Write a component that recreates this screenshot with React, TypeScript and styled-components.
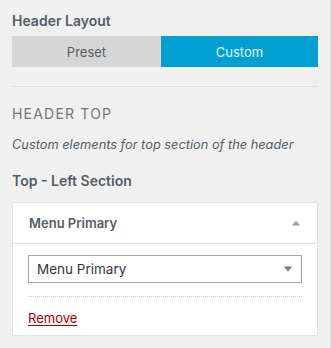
import { FC } from "react";
import styled, { createGlobalStyle } from "styled-components";

const GlobalStyle = createGlobalStyle`
  html, body {
    margin: 0;
    padding: 0;
    background: #f0f0f0;
  }
  body {
    font-family: Inter, "Noto Sans", "Liberation Sans", sans-serif;
    -webkit-font-smoothing: antialiased;
  }
`;

const Panel = styled.div`
  box-sizing: border-box;
  width: 331px;
  height: 348px;
  padding: 13px 12px 0 12px;
  background: #f0f0f0;
  border-right: 1px solid #dcdcdc;
  color: #555d66;
`;

const Title = styled.h3`
  margin: 0;
  font-size: 14px;
  font-weight: 600;
  line-height: 16px;
  color: #555d66;
`;

const Switcher = styled.div`
  display: flex;
  margin-top: 7px;
  height: 31px;
`;

const SwitchButton = styled.button<{ $active?: boolean }>`
  flex: ${(p) => (p.$active ? "0 0 157px" : "1")};
  border: 0;
  margin: 0;
  padding: 0;
  font-family: inherit;
  font-size: 13px;
  background: ${(p) => (p.$active ? "#00a0d2" : "#d6d6d6")};
  color: ${(p) => (p.$active ? "#e6f6fb" : "#555d66")};
  cursor: pointer;
`;

const Divider = styled.hr`
  border: 0;
  border-top: 1px solid #dcdcdc;
  margin: 19px 0 0 0;
`;

const SectionHeading = styled.div`
  margin-top: 19px;
  font-size: 14px;
  line-height: 16px;
  letter-spacing: 1.2px;
  text-transform: uppercase;
  color: #72777c;
`;

const Description = styled.p`
  margin: 15px 0 0 0;
  font-size: 12.8px;
  line-height: 16px;
  font-style: italic;
  color: #555d66;
`;

const SubTitle = styled(Title)`
  margin-top: 20px;
`;

const Card = styled.div`
  margin-top: 13px;
  background: #fff;
  border: 1px solid #e2e2e2;
`;

const CardHeader = styled.div`
  display: flex;
  align-items: center;
  justify-content: space-between;
  height: 40px;
  padding: 0 16px;
  border-bottom: 1px solid #e2e2e2;
  font-size: 13px;
  font-weight: 600;
  color: #555d66;
`;

const CardBody = styled.div`
  box-sizing: border-box;
  padding: 11px 15px 0 15px;
  height: 91px;
`;

const SelectBox = styled.div`
  display: flex;
  align-items: center;
  justify-content: space-between;
  height: 26px;
  padding: 0 8px 0 8px;
  border: 1px solid #a8a8a8;
  font-size: 13.5px;
  color: #32373c;
`;

const DottedRule = styled.div`
  margin-top: 13px;
  border-top: 1px dotted #c8c8c8;
`;

const RemoveLink = styled.a`
  display: inline-block;
  margin-top: 13px;
  font-size: 13px;
  color: #a00;
  text-decoration: underline;
  text-underline-offset: 2px;
  cursor: pointer;
`;

const Caret: FC<{ up?: boolean; color: string }> = ({ up, color }) => (
  <svg width="10" height="6" viewBox="0 0 10 6">
    <path d={up ? "M1 5.5 L5 0.5 L9 5.5 Z" : "M1 0.5 L9 0.5 L5 5.5 Z"} fill={color} />
  </svg>
);

const App: FC = () => {
  return (
    <>
      <GlobalStyle />
      <Panel>
        <Title>Header Layout</Title>
        <Switcher>
          <SwitchButton>Preset</SwitchButton>
          <SwitchButton $active>Custom</SwitchButton>
        </Switcher>
        <Divider />
        <SectionHeading>Header Top</SectionHeading>
        <Description>Custom elements for top section of the header</Description>
        <SubTitle>Top - Left Section</SubTitle>
        <Card>
          <CardHeader>
            Menu Primary
            <Caret up color="#a0a5aa" />
          </CardHeader>
          <CardBody>
            <SelectBox>
              Menu Primary
              <Caret color="#777" />
            </SelectBox>
            <DottedRule />
            <RemoveLink>Remove</RemoveLink>
          </CardBody>
        </Card>
      </Panel>
    </>
  );
};

export default App;
